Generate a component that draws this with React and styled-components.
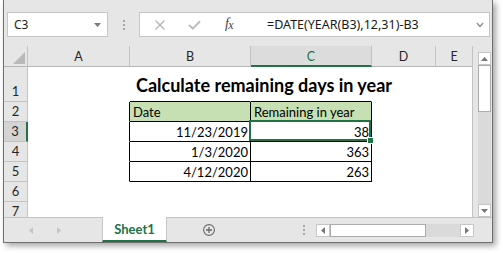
import React from "react";
import styled, { createGlobalStyle } from "styled-components";

const GREEN = "#217346";
const LINE = "#c3c3c3";

const Global = createGlobalStyle`
  html, body { margin: 0; padding: 0; background: #ffffff; }
  body { width: 503px; height: 253px; overflow: hidden; }
`;

const Window = styled.div`
  box-sizing: border-box;
  margin-left: 3px;
  width: 490px;
  height: 243px;
  background: #e6e6e6;
  border: 1px solid #6f6f6f;
  border-top: none;
  box-shadow: 3px 3px 6px rgba(0, 0, 0, 0.35);
  display: flex;
  flex-direction: column;
  font-family: Lato, "Noto Sans", sans-serif;
`;

/* ---------- formula bar ---------- */
const FormulaBar = styled.div`
  box-sizing: border-box;
  height: 46px;
  display: flex;
  align-items: flex-start;
  padding: 12px 0 0 3px;
`;

const NameBox = styled.div`
  box-sizing: border-box;
  width: 101px;
  height: 25px;
  background: #fff;
  border: 1px solid #c6c6c6;
  display: flex;
  align-items: center;
  justify-content: space-between;
  padding: 0 6px;
  font: 12px "Noto Sans", sans-serif;
  color: #1f1f1f;
`;

const Grip = styled.div`
  width: 31px;
  height: 25px;
  display: flex;
  flex-direction: column;
  align-items: center;
  justify-content: center;
  gap: 2px;
  span {
    width: 2px;
    height: 2px;
    background: #a8a8a8;
  }
`;

const FormulaBox = styled.div`
  box-sizing: border-box;
  width: 351px;
  height: 25px;
  background: #fff;
  border: 1px solid #c6c6c6;
  display: flex;
  align-items: center;
  padding-left: 3px;
`;

const IconSlot = styled.div`
  width: ${(p) => p.$w || 34}px;
  height: 23px;
  display: flex;
  align-items: center;
  justify-content: center;
`;

const Fx = styled.span`
  font: italic 14px "Liberation Serif", serif;
  color: #444;
  letter-spacing: -0.5px;
  sub {
    font-size: 12px;
    vertical-align: -1px;
  }
`;

const FormulaText = styled.div`
  flex: 1;
  margin-left: 20px;
  font: 12.5px "Noto Sans", sans-serif;
  color: #1a1a1a;
  white-space: nowrap;
`;

const Chevron = styled.div`
  width: 9px;
  margin-right: 4px;
  display: flex;
`;

/* ---------- sheet ---------- */
const Body = styled.div`
  display: flex;
  height: 171px;
`;

const Sheet = styled.div`
  box-sizing: border-box;
  width: 469px;
  height: 171px;
  display: grid;
  grid-template-columns: 24px 102px 121px 121px 64px 36px;
  grid-template-rows: 21px 35px repeat(6, 20px);
  background: #fff;
  border-right: 1px solid ${LINE};
  overflow: hidden;
`;

const Corner = styled.div`
  box-sizing: border-box;
  background: #e6e6e6;
  border-right: 1px solid ${LINE};
  border-bottom: 1px solid #b6b6b6;
  display: flex;
  align-items: flex-end;
  justify-content: flex-end;
  padding: 0 2px 2px 0;
`;

const ColHead = styled.div`
  box-sizing: border-box;
  background: ${(p) => (p.$sel ? "#dcdcdc" : "#e6e6e6")};
  border-right: ${(p) => (p.$last ? "none" : `1px solid ${LINE}`)};
  border-bottom: ${(p) => (p.$sel ? `2px solid ${GREEN}` : "1px solid #b6b6b6")};
  color: ${(p) => (p.$sel ? GREEN : "#262626")};
  display: flex;
  align-items: center;
  justify-content: center;
  padding-top: ${(p) => (p.$sel ? 1 : 0)}px;
  font: 12.5px Lato, sans-serif;
`;

const RowHead = styled.div`
  box-sizing: border-box;
  background: ${(p) => (p.$sel ? "#d4d4d4" : "#e6e6e6")};
  border-right: ${(p) => (p.$sel ? `2px solid ${GREEN}` : `1px solid ${LINE}`)};
  border-bottom: 1px solid ${LINE};
  color: #262626;
  display: flex;
  align-items: flex-end;
  justify-content: center;
  padding-bottom: 1px;
  font: 13px Lato, sans-serif;
  line-height: 18px;
`;

const Cell = styled.div`
  box-sizing: border-box;
  position: relative;
  border-right: 1px solid ${(p) => p.$r || "transparent"};
  border-bottom: 1px solid ${(p) => p.$b || "transparent"};
  background: ${(p) => p.$fill || "transparent"};
  display: flex;
  align-items: flex-end;
  justify-content: ${(p) => (p.$align === "right" ? "flex-end" : "flex-start")};
  padding: 0 2px 0 3px;
  font: 13px Lato, sans-serif;
  line-height: 18px;
  color: #000;
  white-space: nowrap;
  ${(p) =>
    p.$active &&
    `
    &::after {
      content: "";
      position: absolute;
      top: -2px;
      left: -2px;
      right: 0;
      bottom: 0;
      border: 2px solid ${GREEN};
      pointer-events: none;
    }
    &::before {
      content: "";
      position: absolute;
      right: -3px;
      bottom: -3px;
      width: 5px;
      height: 5px;
      background: ${GREEN};
      border: 1px solid #fff;
      z-index: 2;
    }
  `}
`;

const Title = styled.span`
  position: relative;
  z-index: 1;
  padding-left: 3px;
  padding-bottom: 5px;
  font: bold 18px Lato, sans-serif;
  line-height: 22px;
  color: #000;
`;

/* ---------- vertical scroll ---------- */
const VScroll = styled.div`
  box-sizing: border-box;
  width: 19px;
  padding: 6px 1px 0 5px;
  display: flex;
  flex-direction: column;
`;

const ScrollBtn = styled.div`
  box-sizing: border-box;
  width: ${(p) => p.$w || 13}px;
  height: ${(p) => p.$h || 13}px;
  background: #fff;
  border: 1px solid #c6c6c6;
  display: flex;
  align-items: center;
  justify-content: center;
  flex-shrink: 0;
`;

const Thumb = styled.div`
  box-sizing: border-box;
  background: #fff;
  border: 1px solid #ababab;
  flex-shrink: 0;
  width: ${(p) => p.$w}px;
  height: ${(p) => p.$h}px;
`;

const Track = styled.div`
  flex: 1;
  background: #dadada;
`;

/* ---------- tab bar ---------- */
const TabBar = styled.div`
  box-sizing: border-box;
  height: 25px;
  border-top: 1px solid #c3c3c3;
  display: flex;
  align-items: stretch;
`;

const Nav = styled.div`
  box-sizing: border-box;
  width: 98px;
  display: flex;
  align-items: center;
  padding-left: 25px;
  gap: 24px;
`;

const Tab = styled.div`
  box-sizing: border-box;
  width: 65px;
  margin-top: -1px;
  background: #fff;
  border-left: 1px solid #c6c6c6;
  border-right: 1px solid #c6c6c6;
  border-bottom: 2px solid ${GREEN};
  display: flex;
  align-items: center;
  justify-content: center;
  padding-top: 1px;
  font: bold 13px Lato, sans-serif;
  color: ${GREEN};
`;

const AddSheet = styled.div`
  width: 36px;
  display: flex;
  align-items: center;
  margin-left: 36px;
`;

const Spacer = styled.div`
  flex: 1;
`;

const TabGrip = styled(Grip)`
  width: 12px;
  height: auto;
  margin-right: 6px;
`;

const HScroll = styled.div`
  box-sizing: border-box;
  width: 158px;
  margin-right: 18px;
  display: flex;
  align-items: center;
  padding-top: 1px;
`;

const HTrack = styled.div`
  display: flex;
  height: 13px;
  flex: 1;
`;

const Tri = ({ dir, color = "#777", w = 7, h = 4 }) => {
  const pts = {
    up: `0,${h} ${w},${h} ${w / 2},0`,
    down: `0,0 ${w},0 ${w / 2},${h}`,
    left: `${h},0 ${h},${w} 0,${w / 2}`,
    right: `0,0 0,${w} ${h},${w / 2}`,
  }[dir];
  const vw = dir === "up" || dir === "down" ? w : h;
  const vh = dir === "up" || dir === "down" ? h : w;
  return (
    <svg width={vw} height={vh} viewBox={`0 0 ${vw} ${vh}`}>
      <polygon points={pts} fill={color} />
    </svg>
  );
};

const cols = ["A", "B", "C", "D", "E"];
const rows = [
  { n: 1, title: true },
  { n: 2, b: "Date", c: "Remaining in year", head: true },
  { n: 3, b: "11/23/2019", c: "38", active: true },
  { n: 4, b: "1/3/2020", c: "363" },
  { n: 5, b: "4/12/2020", c: "263" },
  { n: 6 },
  { n: 7 },
];

export default function App() {
  return (
    <>
      <Global />
      <Window>
        <FormulaBar>
          <NameBox>
            <span>C3</span>
            <Tri dir="down" color="#7a7a7a" w={7} h={4} />
          </NameBox>
          <Grip>
            <span />
            <span />
            <span />
          </Grip>
          <FormulaBox>
            <IconSlot>
              <svg width="10" height="10" viewBox="0 0 10 10">
                <path d="M0.5 0.5 L9.5 9.5 M9.5 0.5 L0.5 9.5" stroke="#b3b3b3" strokeWidth="1.3" />
              </svg>
            </IconSlot>
            <IconSlot>
              <svg width="13" height="10" viewBox="0 0 13 10">
                <path d="M1 5 L4.8 8.6 L12 1.2" stroke="#bdbdbd" strokeWidth="2" fill="none" />
              </svg>
            </IconSlot>
            <IconSlot $w={36}>
              <Fx>
                f<sub>x</sub>
              </Fx>
            </IconSlot>
            <FormulaText>=DATE(YEAR(B3),12,31)-B3</FormulaText>
            <Chevron>
              <svg width="8" height="6" viewBox="0 0 8 6">
                <path d="M0.8 1 L4 4.4 L7.2 1" stroke="#9a9a9a" strokeWidth="1.6" fill="none" />
              </svg>
            </Chevron>
          </FormulaBox>
        </FormulaBar>

        <Body>
          <Sheet>
            <Corner>
              <svg width="12" height="12" viewBox="0 0 12 12">
                <polygon points="12,0 12,12 0,12" fill="#b9b9b9" />
              </svg>
            </Corner>
            {cols.map((c, i) => (
              <ColHead key={c} $sel={c === "C"} $last={i === cols.length - 1}>
                {c}
              </ColHead>
            ))}
            {rows.map((r) => {
              const inTable = r.n >= 2 && r.n <= 5;
              const topEdge = r.n === 1;
              const align = r.head || r.title ? "left" : "right";
              return (
                <React.Fragment key={r.n}>
                  <RowHead $sel={r.n === 3}>{r.n}</RowHead>
                  <Cell $r={inTable ? "#000" : undefined} />
                  <Cell
                    $r={inTable ? "#000" : undefined}
                    $b={inTable || topEdge ? "#000" : undefined}
                    $fill={r.head ? "#c6e0b4" : undefined}
                    $align={align}
                  >
                    {r.title ? <Title>Calculate remaining days in year</Title> : r.b}
                  </Cell>
                  <Cell
                    $r={inTable ? "#000" : undefined}
                    $b={inTable || topEdge ? "#000" : undefined}
                    $fill={r.head ? "#c6e0b4" : undefined}
                    $align={align}
                    $active={r.active}
                  >
                    {r.c}
                  </Cell>
                  <Cell />
                  <Cell />
                </React.Fragment>
              );
            })}
          </Sheet>
          <VScroll>
            <ScrollBtn>
              <Tri dir="up" />
            </ScrollBtn>
            <Thumb $w={13} $h={47} />
            <Track />
            <ScrollBtn>
              <Tri dir="down" />
            </ScrollBtn>
          </VScroll>
        </Body>

        <TabBar>
          <Nav>
            <Tri dir="left" color="#c4c4c4" w={7} h={4} />
            <Tri dir="right" color="#c4c4c4" w={7} h={4} />
          </Nav>
          <Tab>Sheet1</Tab>
          <AddSheet>
            <svg width="12" height="12" viewBox="0 0 12 12">
              <circle cx="6" cy="6" r="5.4" fill="none" stroke="#6a6a6a" strokeWidth="1.1" />
              <path d="M6 3 V9 M3 6 H9" stroke="#6a6a6a" strokeWidth="1.3" />
            </svg>
          </AddSheet>
          <Spacer />
          <TabGrip>
            <span />
            <span />
            <span />
          </TabGrip>
          <HScroll>
            <HTrack>
              <ScrollBtn $w={14}>
                <Tri dir="left" />
              </ScrollBtn>
              <Thumb $w={96} $h={13} />
              <Track />
              <ScrollBtn $w={14}>
                <Tri dir="right" />
              </ScrollBtn>
            </HTrack>
          </HScroll>
        </TabBar>
      </Window>
    </>
  );
}
